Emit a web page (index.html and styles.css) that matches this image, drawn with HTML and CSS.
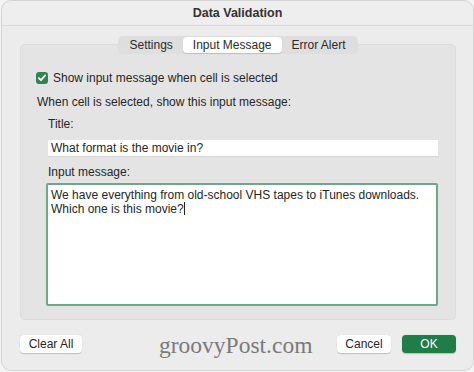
FILE: index.html
```html
<!DOCTYPE html>
<html>
<head>
<meta charset="utf-8">
<link rel="stylesheet" href="styles.css">
</head>
<body>
<div class="window">
  <div class="titlebar">Data Validation</div>
  <div class="tabs">
    <span class="tab t1">Settings</span>
    <span class="tab active">Input Message</span>
    <span class="tab t3">Error Alert</span>
  </div>
  <div class="group">
    <div class="check-row">
      <span class="checkbox">
        <svg width="12" height="12" viewBox="0 0 12 12"><path d="M2.9 6.1 L5 8.2 L9.1 3.5" fill="none" stroke="#fff" stroke-width="1.8" stroke-linecap="round" stroke-linejoin="round"/></svg>
      </span>
      <span>Show input message when cell is selected</span>
    </div>
    <div class="row">When cell is selected, show this input message:</div>
    <div class="row indent label-title">Title:</div>
    <div class="field">What format is the movie in?</div>
    <div class="row indent label-msg">Input message:</div>
    <div class="textarea">We have everything from old-school VHS tapes to iTunes downloads.<br>Which one is this movie?<span class="caret"></span></div>
  </div>
  <div class="footer">
    <span class="btn clear">Clear All</span>
    <span class="spacer"></span>
    <span class="btn cancel">Cancel</span>
    <span class="btn ok">OK</span>
  </div>
  <div class="watermark">groovyPost.com</div>
</div>
</body>
</html>
```
FILE: styles.css
```css
html, body {
  margin: 0;
  padding: 0;
}
body {
  width: 474px;
  height: 372px;
  background: #f4f4f4;
  font-family: "Liberation Sans", Arial, sans-serif;
  font-size: 12px;
  color: #262626;
  overflow: hidden;
}
.window {
  position: relative;
  box-sizing: border-box;
  width: 473px;
  height: 371px;
  margin-left: 1px;
  background: #ececec;
  border: 1px solid #d4d4d4;
  border-radius: 10px;
  display: flex;
  flex-direction: column;
}
.titlebar {
  height: 24px;
  line-height: 24px;
  text-align: center;
  font-weight: bold;
  font-size: 12.5px;
  color: #333;
  border-bottom: 1px solid #dadada;
  background: #eeeeee;
  border-radius: 10px 10px 0 0;
}
.tabs {
  align-self: center;
  margin-top: 10px;
  margin-left: 1px;
  display: flex;
  align-items: center;
  height: 18px;
  padding: 0 1px;
  background: #dedede;
  border-radius: 5px;
  position: relative;
  z-index: 1;
}
.tab {
  line-height: 16px;
  font-size: 12px;
  color: #2b2b2b;
}
.t1 {
  padding: 0 10px 0 10px;
}
.t3 {
  padding: 0 11px 0 10px;
}
.tab.active {
  background: #fff;
  border-radius: 4px;
  padding: 0 10px;
  box-shadow: 0 0.5px 1px rgba(0,0,0,0.15);
}
.group {
  margin: -10px 17px 0 18px;
  height: 276px;
  box-sizing: border-box;
  background: #e4e4e4;
  border: 1px solid #dcdcdc;
  border-radius: 5px;
  padding: 24px 17px 0 16px;
  display: flex;
  flex-direction: column;
}
.check-row {
  display: flex;
  align-items: center;
  height: 18px;
  gap: 5px;
}
.checkbox {
  width: 12px;
  height: 12px;
  border-radius: 3px;
  background: #2f8552;
  display: inline-flex;
  margin-left: -1px;
}
.row {
  height: 18px;
  line-height: 18px;
  margin-top: 6px;
}
.indent {
  padding-left: 11px;
}
.label-title {
  margin-top: 4px;
}
.field {
  margin: 7px 0 0 11px;
  height: 17px;
  line-height: 17px;
  background: #fff;
  padding-left: 3px;
  border-bottom: 1px solid #d6d6d6;
  box-sizing: border-box;
}
.label-msg {
  margin-top: 6px;
}
.textarea {
  margin: 2px 0 0 9px;
  height: 123px;
  box-sizing: border-box;
  background: #fff;
  border: 2.5px solid #6ea78a;
  border-radius: 2px;
  padding: 3px 0 0 3px;
  line-height: 14px;
}
.caret {
  display: inline-block;
  width: 1px;
  height: 13px;
  background: #222;
  vertical-align: -2px;
}
.footer {
  display: flex;
  align-items: center;
  padding: 15px 17px 0 18px;
  gap: 11px;
}
.spacer {
  flex: 1;
}
.btn {
  height: 18px;
  line-height: 18px;
  background: #fff;
  border-radius: 4px;
  font-size: 12px;
  color: #262626;
  box-shadow: 0 0.5px 1px rgba(0,0,0,0.2);
  text-align: center;
  box-sizing: border-box;
}
.clear {
  width: 62px;
}
.cancel {
  width: 54px;
}
.ok {
  background: #1f7d48;
  color: #fff;
  width: 54px;
}
.watermark {
  position: absolute;
  left: 157px;
  top: 331px;
  font-family: "Liberation Serif", "Times New Roman", serif;
  font-size: 23.5px;
  color: #7a7a7a;
}
```
